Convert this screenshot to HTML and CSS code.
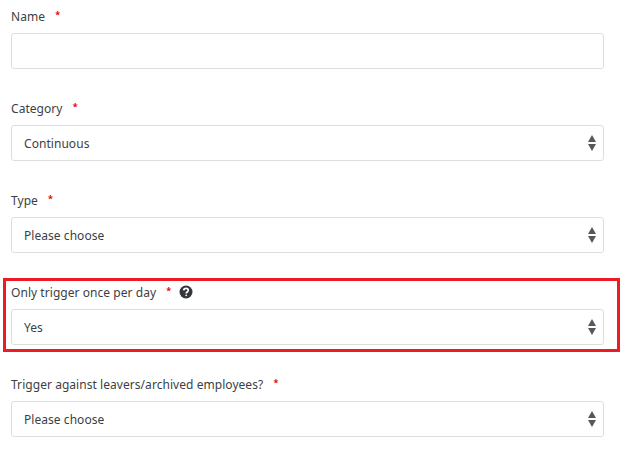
FILE: index.html
```html
<!DOCTYPE html>
<html lang="en">
<head>
  <meta charset="UTF-8" />
  <title>Trigger form</title>
  <link rel="stylesheet" href="styles.css">
</head>
<body>
  <form class="form">
    <div class="field">
      <label class="label">Name <span class="req">*</span></label>
      <div class="box"></div>
    </div>

    <div class="field">
      <label class="label">Category <span class="req">*</span></label>
      <div class="box">
        <span>Continuous</span>
        <svg class="arrows" viewBox="0 0 8 16"><path d="M4 0 8 7H0zM0 9h8l-4 7z"/></svg>
      </div>
    </div>

    <div class="field">
      <label class="label">Type <span class="req">*</span></label>
      <div class="box">
        <span>Please choose</span>
        <svg class="arrows" viewBox="0 0 8 16"><path d="M4 0 8 7H0zM0 9h8l-4 7z"/></svg>
      </div>
    </div>

    <div class="field highlight">
      <label class="label">Only trigger once per day <span class="req">*</span>
        <svg class="help" viewBox="0 0 14 14">
          <circle cx="7" cy="7" r="6.5"/>
          <path class="help-mark" d="M4.7 5.4C4.8 4.1 5.8 3.4 7 3.4c1.3 0 2.3.8 2.3 1.9 0 1.7-2.1 1.6-2.1 3.1"/>
          <circle class="help-dot" cx="7.2" cy="10.3" r="0.9"/>
        </svg>
      </label>
      <div class="box">
        <span>Yes</span>
        <svg class="arrows" viewBox="0 0 8 16"><path d="M4 0 8 7H0zM0 9h8l-4 7z"/></svg>
      </div>
    </div>

    <div class="field">
      <label class="label">Trigger against leavers/archived employees? <span class="req">*</span></label>
      <div class="box">
        <span>Please choose</span>
        <svg class="arrows" viewBox="0 0 8 16"><path d="M4 0 8 7H0zM0 9h8l-4 7z"/></svg>
      </div>
    </div>
  </form>
</body>
</html>
```

FILE: styles.css
```css
body {
  margin: 0;
  background: #fff;
  font-family: "Noto Sans", sans-serif;
  font-size: 12px;
  letter-spacing: 0.05px;
  color: #3b3f44;
  overflow: hidden;
}

.form {
  display: flex;
  flex-direction: column;
  gap: 18px;
  padding-top: 2px;
  margin: 0 7px 0 3px;
}

.field {
  border: 3px solid transparent;
  padding: 0 13px 4px 5px;
}

.highlight {
  border-color: #ed1c24;
}

.label {
  display: flex;
  align-items: flex-start;
  height: 28px;
  padding-top: 3px;
  box-sizing: border-box;
  white-space: pre-wrap;
  line-height: 17px;
}

.req {
  color: #e8000d;
  font-size: 9px;
  font-weight: 700;
  line-height: 14px;
  margin-left: 7px;
}

.help {
  width: 14px;
  height: 14px;
  margin: 1px 0 0 8px;
}

.help circle {
  fill: #33363a;
}

.help .help-mark {
  fill: none;
  stroke: #fff;
  stroke-width: 1.7;
}

.help .help-dot {
  fill: #fff;
}

.box {
  display: flex;
  align-items: center;
  justify-content: space-between;
  box-sizing: border-box;
  height: 36px;
  padding: 0 7px 0 12px;
  border: 1px solid #dedede;
  border-radius: 3px;
}

.arrows {
  width: 8px;
  height: 16px;
  fill: #55585c;
}
```
